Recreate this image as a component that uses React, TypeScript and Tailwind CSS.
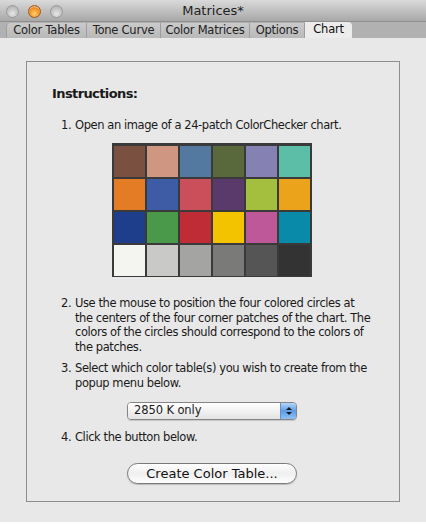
import React from "react";

const patches = [
  "#7a5141", "#cf9781", "#5379a1", "#59693b", "#8582b3", "#5dbea8",
  "#e47c25", "#3e5ba6", "#cb4f5b", "#5a3a6b", "#a3bf3d", "#eba31b",
  "#1e3d8b", "#4a994b", "#bf2c35", "#f3c300", "#bf5898", "#0a8aa9",
  "#f4f4f1", "#c9cac7", "#a4a4a2", "#7a7a79", "#555555", "#333333",
];

const tabs = [
  { label: "Color Tables", w: "w-[81px]" },
  { label: "Tone Curve", w: "w-[74px]" },
  { label: "Color Matrices", w: "w-[89px]" },
  { label: "Options", w: "w-[55px]" },
];

function Light({ orange }: { orange?: boolean }) {
  return orange ? (
    <div className="w-[13px] h-[13px] rounded-full border border-[#a0561a] bg-[radial-gradient(circle_at_50%_70%,#ffd27a_0%,#f59a2a_45%,#c9650f_100%)] shadow-[inset_0_1px_1px_rgba(255,255,255,0.6)]" />
  ) : (
    <div className="w-[13px] h-[13px] rounded-full border border-[#9a9a9a] bg-[radial-gradient(circle_at_50%_70%,#e6e6e6_0%,#c6c6c6_50%,#a9a9a9_100%)]" />
  );
}

export default function App() {
  const font = { fontFamily: '"DejaVu Sans", "Liberation Sans", sans-serif' };
  return (
    <div className="w-[426px] h-[524px] bg-white" style={font}>
      <div className="w-[426px] h-[522px] flex flex-col bg-[#e8e8e8]">
        {/* Title bar */}
        <div className="relative h-[22px] flex items-center bg-gradient-to-b from-[#dadada] to-[#a8a8a8] border-b border-[#8e8e8e]">
          <div className="flex items-center gap-[9px] pl-[6px] pt-[1px]">
            <Light />
            <Light orange />
            <Light />
          </div>
          <div className="absolute inset-0 flex items-center justify-center text-[13px] text-[#1e1e1e]">
            Matrices*
          </div>
        </div>
        {/* Tab bar */}
        <div className="h-[16px] flex items-end pl-[6px] bg-[#b1b1b1]">
          {tabs.map((t, i) => (
            <div
              key={t.label}
              className={`${t.w} h-[15px] flex items-center justify-center text-[11.5px] tracking-[-0.25px] leading-none text-[#222] bg-gradient-to-b from-[#cacaca] to-[#b9b9b9] border-r border-[#9d9d9d] ${i === 0 ? "rounded-tl-[4px] border-l" : ""}`}
            >
              {t.label}
            </div>
          ))}
          <div className="w-[47px] h-[16px] flex items-center justify-center text-[11.5px] tracking-[-0.25px] leading-none text-[#111] bg-[#ececec] rounded-tr-[4px]">
            Chart
          </div>
        </div>
        {/* Content */}
        <div className="pt-[23px] pl-[26px]">
          <div className="w-[374px] h-[441px] border border-[#8d8d8d] pl-[25px] pt-[24px] text-[11.5px] tracking-[-0.42px] text-[#1a1a1a]">
            <div className="h-[16px] leading-[16px] font-bold text-[13px] tracking-[-0.6px]">Instructions:</div>
            <div className="mt-[16px] flex leading-[15px]">
              <span className="w-[23px] pl-[9px]">1.</span>
              <span className="whitespace-nowrap">Open an image of a 24-patch ColorChecker chart.</span>
            </div>
            <div className="mt-[10px] ml-[60px] w-[200px] h-[134px] bg-[#3a3a3a] pl-[2px] pt-[3px] grid grid-cols-[repeat(6,31px)] auto-rows-[31px] gap-[2px]">
              {patches.map((c, i) => (
                <div key={i} style={{ backgroundColor: c }} />
              ))}
            </div>
            <div className="mt-[17px] pt-[2px] flex leading-[14.5px]">
              <span className="w-[23px] pl-[9px]">2.</span>
              <span className="whitespace-nowrap">
                Use the mouse to position the four colored circles at
                <br />
                the centers of the four corner patches of the chart. The
                <br />
                colors of the circles should correspond to the colors of
                <br />
                the patches.
              </span>
            </div>
            <div className="mt-[7px] flex leading-[14.5px]">
              <span className="w-[23px] pl-[9px]">3.</span>
              <span className="whitespace-nowrap">
                Select which color table(s) you wish to create from the
                <br />
                popup menu below.
              </span>
            </div>
            <div className="mt-[12px] ml-[75px] w-[170px] h-[18px] flex rounded-[4px] border border-[#858585] overflow-hidden shadow-[0_1px_1px_rgba(0,0,0,0.15)]">
              <div className="flex-1 flex items-center pl-[6px] text-[11.5px] tracking-[-0.1px] bg-gradient-to-b from-[#ffffff] via-[#f2f2f2] to-[#e2e2e2]">
                2850 K only
              </div>
              <div className="w-[16px] flex flex-col items-center justify-center gap-[2px] bg-gradient-to-b from-[#b5d6f7] via-[#5b9ce6] to-[#8ec2f5] border-l border-[#6d8fbf]">
                <svg width="6" height="3" viewBox="0 0 6 3"><path d="M0 3 L3 0 L6 3 Z" fill="#1a1a1a" /></svg>
                <svg width="6" height="3" viewBox="0 0 6 3"><path d="M0 0 L3 3 L6 0 Z" fill="#1a1a1a" /></svg>
              </div>
            </div>
            <div className="mt-[10px] flex leading-[15px]">
              <span className="w-[23px] pl-[9px]">4.</span>
              <span className="whitespace-nowrap">Click the button below.</span>
            </div>
            <div className="mt-[18px] ml-[75px] w-[170px] h-[21px] rounded-full border border-[#7a7a7a] flex items-center justify-center text-[13px] tracking-normal text-[#111] bg-gradient-to-b from-[#ffffff] via-[#efefef] to-[#fdfdfd] shadow-[0_1px_1px_rgba(0,0,0,0.2)]">
              Create Color Table...
            </div>
          </div>
        </div>
      </div>
    </div>
  );
}
